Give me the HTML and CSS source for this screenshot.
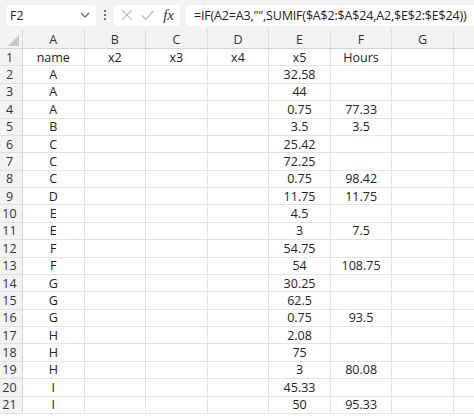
FILE: index.html
```html
<!DOCTYPE html>
<html>
<head>
<meta charset="utf-8">
<link rel="stylesheet" href="styles.css">
</head>
<body>
<div class="app">
  <div class="fbar">
    <div class="namebox"><span>F2</span>
      <svg class="chev" width="10" height="6" viewBox="0 0 10 6"><path d="M1 1 L5 5 L9 1" fill="none" stroke="#555" stroke-width="1.1"/></svg>
    </div>
    <div class="dots"><i></i><i></i><i></i></div>
    <div class="iconbox">
      <svg width="14" height="14" viewBox="0 0 14 14"><path d="M2 2 L12 12 M12 2 L2 12" stroke="#b8b8b8" stroke-width="1.2"/></svg>
      <svg width="16" height="14" viewBox="0 0 16 14"><path d="M2 7.5 L6 11.5 L14 2.5" fill="none" stroke="#b8b8b8" stroke-width="1.2"/></svg>
      <span class="fx">fx</span>
    </div>
    <div class="formula">=IF(A2=A3,"",SUMIF($A$2:$A$24,A2,$E$2:$E$24))</div>
  </div>
  <div class="sheet" id="sheet">
    <div class="corner"><svg width="23" height="19" viewBox="0 0 23 19"><path d="M19 5 L19 16 L8 16 Z" fill="#c9c9c9"/></svg></div>
    <div class="ch">A</div><div class="ch">B</div><div class="ch">C</div><div class="ch">D</div><div class="ch">E</div><div class="ch">F</div><div class="ch">G</div><div class="ch last"></div>
  </div>
</div>
<script src="script.js"></script>
</body>
</html>
```
FILE: styles.css
```css
* { box-sizing: border-box; }
html, body { margin: 0; padding: 0; background: #fff; }
body { font-family: "Open Sans", "Liberation Sans", sans-serif; color: #222; width: 474px; height: 420px; overflow: hidden; }
.fbar { height: 30px; background: #f3f3f3; display: flex; align-items: center; padding: 4px 0 4px 6px; gap: 0; }
.namebox { width: 90px; height: 21px; background: #fff; border-radius: 4px; display: flex; align-items: center; justify-content: space-between; padding: 0 6px 0 4px; font-size: 12.5px; color: #222; }
.dots { width: 18px; display: flex; flex-direction: column; align-items: center; gap: 2px; }
.dots i { width: 2px; height: 2px; background: #444; border-radius: 1px; display: block; }
.iconbox { width: 66px; height: 21px; background: #fff; border-radius: 4px; display: flex; align-items: center; padding: 0 6px; gap: 6px; }
.fx { font-family: "Liberation Serif", serif; font-style: italic; font-size: 15px; color: #333; margin-left: 2px; }
.formula { flex: 1; height: 21px; background: #fff; border-radius: 4px 0 0 4px; margin-left: 6px; font-size: 12.5px; display: flex; align-items: center; padding-left: 8px; white-space: nowrap; overflow: hidden; color: #222; letter-spacing: -0.18px; }
.sheet { display: grid; grid-template-columns: 23px repeat(7, 61.57px) 1fr; grid-template-rows: 19px repeat(21, 17.38px); font-size: 12.5px; }
.corner { background: #f3f3f3; border-right: 1px solid #d4d4d4; border-bottom: 1px solid #d4d4d4; }
.corner svg { display: block; }
.ch { background: #f3f3f3; border-right: 1px solid #dcdcdc; border-bottom: 1px solid #d4d4d4; display: flex; align-items: center; justify-content: center; color: #333; }
.ch.last { border-right: none; }
.rh { background: #f3f3f3; border-right: 1px solid #d4d4d4; border-bottom: 1px solid #e0e0e0; display: flex; align-items: center; justify-content: center; padding-right: 3px; color: #333; }
.c { border-right: 1px solid #e3e3e3; border-bottom: 1px solid #e3e3e3; display: flex; align-items: center; justify-content: center; white-space: nowrap; }
.c.last { border-right: none; }
```
FILE: script.js
```js
var data = [
 ["name","x2","x3","x4","x5","Hours",""],
 ["A","","","","32.58","",""],
 ["A","","","","44","",""],
 ["A","","","","0.75","77.33",""],
 ["B","","","","3.5","3.5",""],
 ["C","","","","25.42","",""],
 ["C","","","","72.25","",""],
 ["C","","","","0.75","98.42",""],
 ["D","","","","11.75","11.75",""],
 ["E","","","","4.5","",""],
 ["E","","","","3","7.5",""],
 ["F","","","","54.75","",""],
 ["F","","","","54","108.75",""],
 ["G","","","","30.25","",""],
 ["G","","","","62.5","",""],
 ["G","","","","0.75","93.5",""],
 ["H","","","","2.08","",""],
 ["H","","","","75","",""],
 ["H","","","","3","80.08",""],
 ["I","","","","45.33","",""],
 ["I","","","","50","95.33",""]
];
var s = document.getElementById("sheet");
data.forEach(function(r, i){
  var h = document.createElement("div"); h.className = "rh"; h.textContent = i+1; s.appendChild(h);
  r.forEach(function(v){ var c = document.createElement("div"); c.className = "c"; c.textContent = v; s.appendChild(c); });
  var l = document.createElement("div"); l.className = "c last"; s.appendChild(l);
});
```
